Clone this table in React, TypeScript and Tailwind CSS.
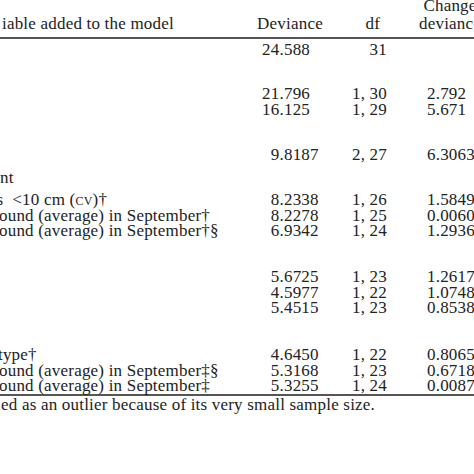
type Row = {
  label?: React.ReactNode;
  labelClass?: string;
  dev?: [string, string];
  df?: string;
  ch?: string;
  mt?: string;
};

const rows: Row[] = [
  { dev: ["24", "588"], df: "31", mt: "mt-[3px]" },
  { dev: ["21", "796"], df: "1, 30", ch: "2.792", mt: "mt-[28.5px]" },
  { dev: ["16", "125"], df: "1, 29", ch: "5.671" },
  { dev: ["9", "8187"], df: "2, 27", ch: "6.3063", mt: "mt-[30px]" },
  { label: "nt", mt: "mt-[7.5px]" },
  {
    label: (
      <>
        s
        <span className="ml-[9px]">
          &lt;10 cm (<span className="[font-variant:small-caps]">cv</span>)†
        </span>
      </>
    ),
    labelClass: "ml-[-3.5px]",
    dev: ["8", "2338"],
    df: "1, 26",
    ch: "1.5849",
    mt: "mt-[6.5px]",
  },
  { label: "ound (average) in September†", labelClass: "ml-[-1px]", dev: ["8", "2278"], df: "1, 25", ch: "0.0060" },
  { label: "ound (average) in September†§", labelClass: "ml-[-1px]", dev: ["6", "9342"], df: "1, 24", ch: "1.2936" },
  { dev: ["5", "6725"], df: "1, 23", ch: "1.2617", mt: "mt-[30.5px]" },
  { dev: ["4", "5977"], df: "1, 22", ch: "1.0748" },
  { dev: ["5", "4515"], df: "1, 23", ch: "0.8538" },
  { label: "type†", labelClass: "ml-[-2px]", dev: ["4", "6450"], df: "1, 22", ch: "0.8065", mt: "mt-[31.5px]" },
  { label: "ound (average) in September‡§", labelClass: "ml-[-1px]", dev: ["5", "3168"], df: "1, 23", ch: "0.6718" },
  { label: "ound (average) in September‡", labelClass: "ml-[-1px]", dev: ["5", "3255"], df: "1, 24", ch: "0.0087" },
];

function DataRow({ row }: { row: Row }) {
  return (
    <div className={`flex leading-[15.5px] ${row.mt ?? ""}`}>
      <div className="w-[250px] whitespace-nowrap">
        {row.label && <div className={row.labelClass ?? ""}>{row.label}</div>}
      </div>
      <div className="w-[80px] whitespace-nowrap">
        {row.dev && (
          <>
            <span className="inline-block w-[29.5px] text-right">{row.dev[0]}</span>.{row.dev[1]}
          </>
        )}
      </div>
      <div className="w-[57px] text-right whitespace-nowrap">{row.df}</div>
      <div className="w-[126px] pl-[40px] whitespace-nowrap">{row.ch}</div>
    </div>
  );
}

export default function App() {
  return (
    <div className="w-[474px] h-[474px] overflow-hidden bg-white text-[#222] text-[17px] tracking-[0.2px] font-['Liberation_Serif',serif]">
      <div className="w-[520px]">
        <div className="mt-[-3px] flex items-end leading-[18px] pb-[4px] border-b-2 border-[#555]">
          <div className="w-[250px] whitespace-nowrap pl-[2px]">iable added to the model</div>
          <div className="w-[80px] text-center">Deviance</div>
          <div className="w-[57px] text-right pr-[7px]">df</div>
          <div className="w-[126px] text-center">
            Change
            <br />
            deviance
          </div>
        </div>
        {rows.map((r, i) => (
          <DataRow key={i} row={r} />
        ))}
        <div className="border-t-2 border-[#555]" />
        <p className="mt-[1.5px] pl-[1px] leading-[15.5px] whitespace-nowrap">
          ed as an outlier because of its very small sample size.
        </p>
      </div>
    </div>
  );
}
